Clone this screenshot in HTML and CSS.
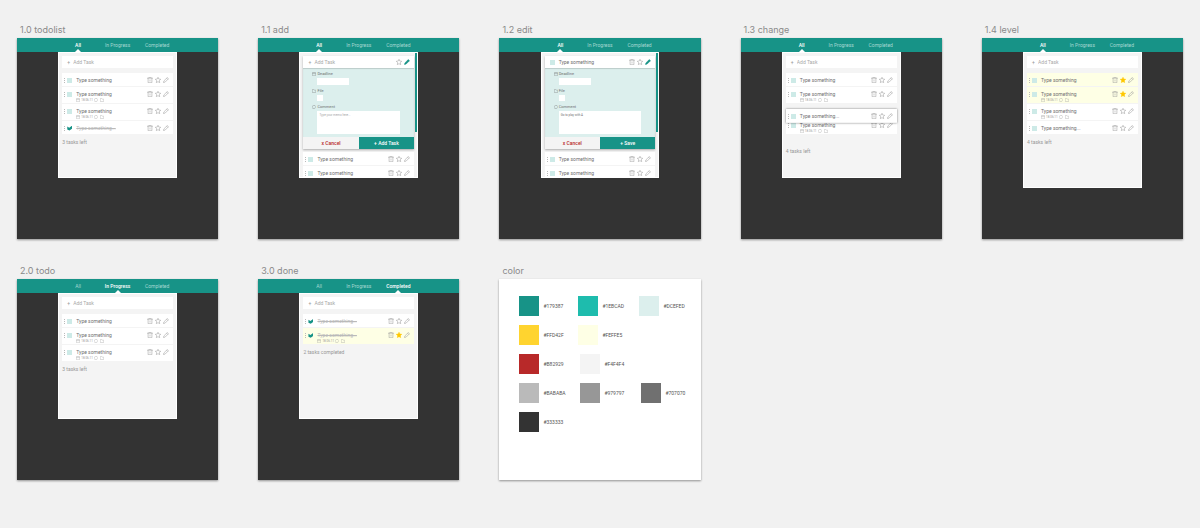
FILE: index.html
```
<!DOCTYPE html>
<html lang="en">
<head>
    <meta charset="UTF-8">
    <meta name="viewport" content="width=device-width, initial-scale=1.0">
    <title>Todolist</title>
    <link rel="stylesheet" href="styles.css">
</head>
<body>
    <!-- shared icons -->
    <svg class="sprite" aria-hidden="true">
        <symbol id="trash" viewBox="0 0 12 12"><path d="M0 2.4h12M3.8 2.4V.6h4.4v1.8M2.2 2.4v9h7.6v-9M6 5v4"/></symbol>
        <symbol id="star" viewBox="0 0 12 12"><path d="M6 0.6l1.6 3.5 3.9.5-2.9 2.7.8 3.9L6 9.3l-3.4 1.9.8-3.9L.5 4.6l3.9-.5z"/></symbol>
        <symbol id="pen" viewBox="0 0 12 12"><path d="M1 11l.8-3.2L8.6 1l2.4 2.4-6.8 6.8zM7.2 2.4l2.4 2.4"/></symbol>
        <symbol id="date" viewBox="0 0 12 12"><path d="M1 2h10v9H1zM1 4.8h10M3.5 0.5v2M8.5 0.5v2"/></symbol>
        <symbol id="memo" viewBox="0 0 12 12"><path d="M3 1.5h6l2 2V8L9 10H5l-2.5 1.5V9.5L1 8V3.5z"/></symbol>
        <symbol id="file" viewBox="0 0 12 12"><path d="M1 10.5v-9h4l1.3 1.8H11v7.2z"/></symbol>
    </svg>

    <main class="boards">
        <section>
            <h2>1.0 todolist</h2>
            <div class="board">
                <nav>
                    <ul>
                        <li><a href="#all" class="active">All</a></li>
                        <li><a href="#progress">In Progress</a></li>
                        <li><a href="#completed">Completed</a></li>
                    </ul>
                </nav>
                <div class="panel">
                    <div class="add-box"><span>+</span><input type="text" placeholder="Add Task" aria-label="Add Task"></div>
                    <ul class="tasks">
                        <li class="task">
                            <i class="drag"></i><label><input type="checkbox"><span>Type something</span></label>
                            <div class="tools"><button aria-label="Delete"><svg><use href="#trash"/></svg></button><button aria-label="Star"><svg><use href="#star"/></svg></button><button aria-label="Edit"><svg><use href="#pen"/></svg></button></div>
                        </li>
                        <li class="task">
                            <i class="drag"></i><label><input type="checkbox"><span>Type something</span></label>
                            <div class="tools"><button aria-label="Delete"><svg><use href="#trash"/></svg></button><button aria-label="Star"><svg><use href="#star"/></svg></button><button aria-label="Edit"><svg><use href="#pen"/></svg></button></div>
                            <p class="meta"><svg><use href="#date"/></svg>18.06.11<svg><use href="#memo"/></svg><svg><use href="#file"/></svg></p>
                        </li>
                        <li class="task">
                            <i class="drag"></i><label><input type="checkbox"><span>Type something</span></label>
                            <div class="tools"><button aria-label="Delete"><svg><use href="#trash"/></svg></button><button aria-label="Star"><svg><use href="#star"/></svg></button><button aria-label="Edit"><svg><use href="#pen"/></svg></button></div>
                            <p class="meta"><svg><use href="#date"/></svg>18.06.11<svg><use href="#memo"/></svg><svg><use href="#file"/></svg></p>
                        </li>
                        <li class="task done">
                            <i class="drag"></i><label><input type="checkbox" checked><span>Type something...</span></label>
                            <div class="tools"><button aria-label="Delete"><svg><use href="#trash"/></svg></button><button aria-label="Star"><svg><use href="#star"/></svg></button><button aria-label="Edit"><svg><use href="#pen"/></svg></button></div>
                        </li>
                    </ul>
                    <p class="count">3 tasks left</p>
                </div>
            </div>
        </section>

        <section>
            <h2>1.1 add</h2>
            <div class="board">
                <nav>
                    <ul>
                        <li><a href="#all" class="active">All</a></li>
                        <li><a href="#progress">In Progress</a></li>
                        <li><a href="#completed">Completed</a></li>
                    </ul>
                </nav>
                <div class="panel scroll">
                    <form class="editor">
                        <div class="add-box">
                            <span>+</span><input type="text" placeholder="Add Task" aria-label="Add Task">
                            <div class="tools"><button type="button" aria-label="Star"><svg><use href="#star"/></svg></button><button type="button" class="editing" aria-label="Edit"><svg><use href="#pen"/></svg></button></div>
                        </div>
                        <div class="fields">
                            <label for="add-date"><svg><use href="#date"/></svg>Deadline</label>
                            <input type="text" id="add-date" class="date">
                            <label for="add-file"><svg><use href="#file"/></svg>File</label>
                            <button type="button" id="add-file" class="file"></button>
                            <label for="add-memo"><svg><use href="#memo"/></svg>Comment</label>
                            <textarea id="add-memo" placeholder="Type your memo here..."></textarea>
                        </div>
                        <div class="actions">
                            <button type="button" class="cancel">x Cancel</button>
                            <button type="button" class="save">+ Add Task</button>
                        </div>
                    </form>
                    <ul class="tasks">
                        <li class="task">
                            <i class="drag"></i><label><input type="checkbox"><span>Type something</span></label>
                            <div class="tools"><button aria-label="Delete"><svg><use href="#trash"/></svg></button><button aria-label="Star"><svg><use href="#star"/></svg></button><button aria-label="Edit"><svg><use href="#pen"/></svg></button></div>
                        </li>
                        <li class="task">
                            <i class="drag"></i><label><input type="checkbox"><span>Type something</span></label>
                            <div class="tools"><button aria-label="Delete"><svg><use href="#trash"/></svg></button><button aria-label="Star"><svg><use href="#star"/></svg></button><button aria-label="Edit"><svg><use href="#pen"/></svg></button></div>
                        </li>
                    </ul>
                </div>
            </div>
        </section>

        <section>
            <h2>1.2 edit</h2>
            <div class="board">
                <nav>
                    <ul>
                        <li><a href="#all" class="active">All</a></li>
                        <li><a href="#progress">In Progress</a></li>
                        <li><a href="#completed">Completed</a></li>
                    </ul>
                </nav>
                <div class="panel scroll">
                    <form class="editor">
                        <div class="task">
                            <i class="drag hidden"></i><label><input type="checkbox"><span>Type something</span></label>
                            <div class="tools"><button type="button" aria-label="Delete"><svg><use href="#trash"/></svg></button><button type="button" aria-label="Star"><svg><use href="#star"/></svg></button><button type="button" class="editing" aria-label="Edit"><svg><use href="#pen"/></svg></button></div>
                        </div>
                        <div class="fields">
                            <label for="edit-date"><svg><use href="#date"/></svg>Deadline</label>
                            <input type="text" id="edit-date" class="date">
                            <label for="edit-file"><svg><use href="#file"/></svg>File</label>
                            <button type="button" id="edit-file" class="file"></button>
                            <label for="edit-memo"><svg><use href="#memo"/></svg>Comment</label>
                            <textarea id="edit-memo">Go to play with A</textarea>
                        </div>
                        <div class="actions">
                            <button type="button" class="cancel">x Cancel</button>
                            <button type="button" class="save">+ Save</button>
                        </div>
                    </form>
                    <ul class="tasks">
                        <li class="task">
                            <i class="drag"></i><label><input type="checkbox"><span>Type something</span></label>
                            <div class="tools"><button aria-label="Delete"><svg><use href="#trash"/></svg></button><button aria-label="Star"><svg><use href="#star"/></svg></button><button aria-label="Edit"><svg><use href="#pen"/></svg></button></div>
                        </li>
                        <li class="task">
                            <i class="drag"></i><label><input type="checkbox"><span>Type something</span></label>
                            <div class="tools"><button aria-label="Delete"><svg><use href="#trash"/></svg></button><button aria-label="Star"><svg><use href="#star"/></svg></button><button aria-label="Edit"><svg><use href="#pen"/></svg></button></div>
                        </li>
                    </ul>
                </div>
            </div>
        </section>

        <section>
            <h2>1.3 change</h2>
            <div class="board">
                <nav>
                    <ul>
                        <li><a href="#all" class="active">All</a></li>
                        <li><a href="#progress">In Progress</a></li>
                        <li><a href="#completed">Completed</a></li>
                    </ul>
                </nav>
                <div class="panel">
                    <div class="add-box"><span>+</span><input type="text" placeholder="Add Task" aria-label="Add Task"></div>
                    <ul class="tasks sorting">
                        <li class="task">
                            <i class="drag"></i><label><input type="checkbox"><span>Type something</span></label>
                            <div class="tools"><button aria-label="Delete"><svg><use href="#trash"/></svg></button><button aria-label="Star"><svg><use href="#star"/></svg></button><button aria-label="Edit"><svg><use href="#pen"/></svg></button></div>
                        </li>
                        <li class="task">
                            <i class="drag"></i><label><input type="checkbox"><span>Type something</span></label>
                            <div class="tools"><button aria-label="Delete"><svg><use href="#trash"/></svg></button><button aria-label="Star"><svg><use href="#star"/></svg></button><button aria-label="Edit"><svg><use href="#pen"/></svg></button></div>
                            <p class="meta"><svg><use href="#date"/></svg>18.06.11<svg><use href="#memo"/></svg><svg><use href="#file"/></svg></p>
                        </li>
                        <li class="task dragging">
                            <i class="drag"></i><label><input type="checkbox"><span>Type something...</span></label>
                            <div class="tools"><button aria-label="Delete"><svg><use href="#trash"/></svg></button><button aria-label="Star"><svg><use href="#star"/></svg></button><button aria-label="Edit"><svg><use href="#pen"/></svg></button></div>
                        </li>
                        <li class="task">
                            <i class="drag"></i><label><input type="checkbox"><span>Type something</span></label>
                            <div class="tools"><button aria-label="Delete"><svg><use href="#trash"/></svg></button><button aria-label="Star"><svg><use href="#star"/></svg></button><button aria-label="Edit"><svg><use href="#pen"/></svg></button></div>
                            <p class="meta"><svg><use href="#date"/></svg>18.06.11<svg><use href="#memo"/></svg><svg><use href="#file"/></svg></p>
                        </li>
                    </ul>
                    <p class="count">4 tasks left</p>
                </div>
            </div>
        </section>

        <section>
            <h2>1.4 level</h2>
            <div class="board">
                <nav>
                    <ul>
                        <li><a href="#all" class="active">All</a></li>
                        <li><a href="#progress">In Progress</a></li>
                        <li><a href="#completed">Completed</a></li>
                    </ul>
                </nav>
                <div class="panel tall">
                    <div class="add-box"><span>+</span><input type="text" placeholder="Add Task" aria-label="Add Task"></div>
                    <ul class="tasks">
                        <li class="task starred">
                            <i class="drag"></i><label><input type="checkbox"><span>Type something</span></label>
                            <div class="tools"><button aria-label="Delete"><svg><use href="#trash"/></svg></button><button class="on" aria-label="Star"><svg><use href="#star"/></svg></button><button aria-label="Edit"><svg><use href="#pen"/></svg></button></div>
                        </li>
                        <li class="task starred">
                            <i class="drag"></i><label><input type="checkbox"><span>Type something</span></label>
                            <div class="tools"><button aria-label="Delete"><svg><use href="#trash"/></svg></button><button class="on" aria-label="Star"><svg><use href="#star"/></svg></button><button aria-label="Edit"><svg><use href="#pen"/></svg></button></div>
                            <p class="meta"><svg><use href="#date"/></svg>18.06.11<svg><use href="#memo"/></svg><svg><use href="#file"/></svg></p>
                        </li>
                        <li class="task">
                            <i class="drag"></i><label><input type="checkbox"><span>Type something</span></label>
                            <div class="tools"><button aria-label="Delete"><svg><use href="#trash"/></svg></button><button aria-label="Star"><svg><use href="#star"/></svg></button><button aria-label="Edit"><svg><use href="#pen"/></svg></button></div>
                            <p class="meta"><svg><use href="#date"/></svg>18.06.11<svg><use href="#memo"/></svg><svg><use href="#file"/></svg></p>
                        </li>
                        <li class="task">
                            <i class="drag"></i><label><input type="checkbox"><span>Type something...</span></label>
                            <div class="tools"><button aria-label="Delete"><svg><use href="#trash"/></svg></button><button aria-label="Star"><svg><use href="#star"/></svg></button><button aria-label="Edit"><svg><use href="#pen"/></svg></button></div>
                        </li>
                    </ul>
                    <p class="count">4 tasks left</p>
                </div>
            </div>
        </section>

        <section>
            <h2>2.0 todo</h2>
            <div class="board">
                <nav>
                    <ul>
                        <li><a href="#all">All</a></li>
                        <li><a href="#progress" class="active">In Progress</a></li>
                        <li><a href="#completed">Completed</a></li>
                    </ul>
                </nav>
                <div class="panel">
                    <div class="add-box"><span>+</span><input type="text" placeholder="Add Task" aria-label="Add Task"></div>
                    <ul class="tasks">
                        <li class="task">
                            <i class="drag"></i><label><input type="checkbox"><span>Type something</span></label>
                            <div class="tools"><button aria-label="Delete"><svg><use href="#trash"/></svg></button><button aria-label="Star"><svg><use href="#star"/></svg></button><button aria-label="Edit"><svg><use href="#pen"/></svg></button></div>
                        </li>
                        <li class="task">
                            <i class="drag"></i><label><input type="checkbox"><span>Type something</span></label>
                            <div class="tools"><button aria-label="Delete"><svg><use href="#trash"/></svg></button><button aria-label="Star"><svg><use href="#star"/></svg></button><button aria-label="Edit"><svg><use href="#pen"/></svg></button></div>
                            <p class="meta"><svg><use href="#date"/></svg>18.06.11<svg><use href="#memo"/></svg><svg><use href="#file"/></svg></p>
                        </li>
                        <li class="task">
                            <i class="drag"></i><label><input type="checkbox"><span>Type something</span></label>
                            <div class="tools"><button aria-label="Delete"><svg><use href="#trash"/></svg></button><button aria-label="Star"><svg><use href="#star"/></svg></button><button aria-label="Edit"><svg><use href="#pen"/></svg></button></div>
                            <p class="meta"><svg><use href="#date"/></svg>18.06.11<svg><use href="#memo"/></svg><svg><use href="#file"/></svg></p>
                        </li>
                    </ul>
                    <p class="count">3 tasks left</p>
                </div>
            </div>
        </section>

        <section>
            <h2>3.0 done</h2>
            <div class="board">
                <nav>
                    <ul>
                        <li><a href="#all">All</a></li>
                        <li><a href="#progress">In Progress</a></li>
                        <li><a href="#completed" class="active">Completed</a></li>
                    </ul>
                </nav>
                <div class="panel">
                    <div class="add-box"><span>+</span><input type="text" placeholder="Add Task" aria-label="Add Task"></div>
                    <ul class="tasks">
                        <li class="task done">
                            <i class="drag"></i><label><input type="checkbox" checked><span>Type something...</span></label>
                            <div class="tools"><button aria-label="Delete"><svg><use href="#trash"/></svg></button><button aria-label="Star"><svg><use href="#star"/></svg></button><button aria-label="Edit"><svg><use href="#pen"/></svg></button></div>
                        </li>
                        <li class="task done starred">
                            <i class="drag"></i><label><input type="checkbox" checked><span>Type something...</span></label>
                            <div class="tools"><button aria-label="Delete"><svg><use href="#trash"/></svg></button><button class="on" aria-label="Star"><svg><use href="#star"/></svg></button><button aria-label="Edit"><svg><use href="#pen"/></svg></button></div>
                            <p class="meta"><svg><use href="#date"/></svg>18.06.11<svg><use href="#memo"/></svg><svg><use href="#file"/></svg></p>
                        </li>
                    </ul>
                    <p class="count">2 tasks completed</p>
                </div>
            </div>
        </section>

        <section>
            <h2>color</h2>
            <div class="board palette">
                <div class="colors">
                    <div class="color"><i class="green"></i>#179387</div>
                    <div class="color"><i class="mint"></i>#1EBCAD</div>
                    <div class="color"><i class="pale"></i>#DCEFED</div>
                </div>
                <div class="colors">
                    <div class="color"><i class="yellow"></i>#FFD42F</div>
                    <div class="color"><i class="cream"></i>#FEFFE5</div>
                </div>
                <div class="colors wide">
                    <div class="color"><i class="red"></i>#B82929</div>
                    <div class="color"><i class="light"></i>#F4F4F4</div>
                </div>
                <div class="colors wide">
                    <div class="color"><i class="silver"></i>#BABABA</div>
                    <div class="color"><i class="gray"></i>#979797</div>
                    <div class="color"><i class="dim"></i>#707070</div>
                </div>
                <div class="colors">
                    <div class="color"><i class="dark"></i>#333333</div>
                </div>
            </div>
        </section>
    </main>
</body>
</html>
```
FILE: styles.css
```
* {
    box-sizing: border-box;
}

body {
    margin: 0;
    background: #f1f1f1;
    color: #707070;
    font-family: Roboto, "Liberation Sans", sans-serif;
    font-size: 5px;
    line-height: 6px;
}

h2, p, ul {
    margin: 0;
    padding: 0;
    list-style: none;
}

input, textarea, button {
    display: block;
    margin: 0;
    padding: 0;
    border: 0;
    border-radius: 0;
    font: inherit;
    color: inherit;
    background: none;
}

button {
    cursor: pointer;
}

svg {
    display: block;
    width: 6px;
    height: 6px;
    fill: none;
    stroke: currentColor;
    stroke-width: 1;
}

.sprite {
    position: absolute;
    width: 0;
    height: 0;
}

.boards {
    display: grid;
    grid-template-columns: repeat(5, 1fr);
    gap: 26px 40px;
    padding: 24px 17px;
}

h2 {
    padding-left: 3px;
    margin-bottom: 2px;
    font-family: Inter, Roboto, sans-serif;
    font-size: 9px;
    font-weight: 400;
    line-height: 12px;
    color: #8a8a8a;
}

.board {
    aspect-ratio: 1;
    background: #333333;
    box-shadow: 0 1px 2px rgba(0, 0, 0, 0.4);
}

/* top tabs */
nav {
    background: #179387;
}

nav ul {
    display: grid;
    grid-template-columns: repeat(3, 1fr);
    width: 59%;
    margin: 0 auto;
    text-align: center;
}

nav a {
    display: block;
    position: relative;
    line-height: 14px;
    color: #a5d8d2;
    text-decoration: none;
}

nav a.active {
    color: white;
    font-weight: 500;
}

nav a.active::after {
    content: "";
    position: absolute;
    left: 50%;
    bottom: 0;
    margin-left: -3px;
    border: 3px solid transparent;
    border-top: 0;
    border-bottom-color: white;
}

/* panel */
.panel {
    position: relative;
    width: 59%;
    height: 126px;
    margin: 0 auto;
    padding: 3px;
    border: 1px solid white;
    background: #f4f4f4;
    overflow: hidden;
}

.panel.tall {
    height: 136px;
}

.panel.scroll::after {
    content: "";
    position: absolute;
    top: 0;
    right: 0;
    width: 2px;
    height: 79px;
    background: #179387;
}

.add-box {
    display: flex;
    align-items: center;
    height: 12px;
    padding: 0 4px 0 5px;
    background: white;
    color: #979797;
}

.add-box span {
    width: 6px;
}

.add-box input {
    flex: 1;
    min-width: 0;
}

::placeholder {
    color: #a8a8a8;
    opacity: 1;
}

.tasks {
    margin-top: 5px;
}

.task {
    display: grid;
    grid-template-columns: 5px 1fr auto;
    align-items: center;
    padding: 4px 4px 3px 0;
    border-bottom: 1px solid #f4f4f4;
    background: white;
}

.task label {
    display: flex;
    align-items: center;
    gap: 4px;
}

.task input {
    appearance: none;
    width: 5px;
    height: 5px;
    background: #cdeae7;
}

.task input:checked {
    background: #179387;
    clip-path: polygon(0 20%, 40% 45%, 100% 0, 100% 60%, 45% 100%, 0 80%);
}

.drag {
    width: 1px;
    height: 5px;
    margin-left: 2px;
    background: repeating-linear-gradient(#bababa 0 1px, transparent 1px 2px);
}

.drag.hidden {
    visibility: hidden;
}

.tools {
    display: flex;
    gap: 2px;
    color: #979797;
}

.tools .editing {
    color: #179387;
}

.tools .editing svg {
    fill: #179387;
}

.tools .on {
    color: #ffc800;
}

.tools .on svg {
    fill: #ffc800;
}

.meta {
    display: flex;
    grid-column: 2 / 4;
    align-items: center;
    gap: 1px;
    padding-left: 9px;
    margin: 1px 0 -2px;
    font-size: 3px;
    line-height: 4px;
    color: #979797;
}

.meta svg {
    width: 4px;
    height: 4px;
}

.meta svg:last-child {
    margin-left: 1px;
}

.task.starred {
    background: #feffe5;
}

.task.done label {
    color: #bababa;
    text-decoration: line-through;
}

.sorting {
    margin-bottom: 13px;
}

.task.dragging {
    position: relative;
    margin: 5px 0 -5px;
    box-shadow: 0 0 2px rgba(0, 0, 0, 0.5);
}

.count {
    margin-top: 4px;
    color: #979797;
}

/* add / edit form */
.editor {
    box-shadow: 0 1px 2px rgba(0, 0, 0, 0.3);
}

.editor .task {
    height: 12px;
    padding: 0 4px 0 0;
    border: 0;
}

.editor + .tasks {
    margin-top: 3px;
}

.fields {
    padding: 3px 14px;
    background: #dcefed;
    box-shadow: inset 0 1px 1px rgba(0, 0, 0, 0.15);
}

.fields label {
    display: flex;
    align-items: center;
    gap: 1px;
    margin: 0 0 1px -5px;
    font-size: 4px;
}

.fields svg {
    width: 4px;
    height: 4px;
}

.fields .date {
    width: 32px;
    height: 7px;
    margin-bottom: 3px;
    background: white;
}

.fields .file {
    width: 6px;
    height: 6px;
    margin-bottom: 3px;
    background: white;
}

.fields textarea {
    width: 100%;
    height: 23px;
    padding: 2px;
    background: white;
    font-size: 3px;
    line-height: 4px;
    resize: none;
}

.actions {
    display: grid;
    grid-template-columns: 1fr 1fr;
}

.actions button {
    height: 12px;
    font-weight: 500;
}

.cancel {
    background: #f4f4f4;
    color: #b82929;
}

.actions .save {
    background: #179387;
    color: white;
}

/* color board */
.palette {
    display: flex;
    flex-direction: column;
    gap: 9px;
    padding: 17px 0 0 20px;
    background: white;
}

.colors {
    display: grid;
    grid-template-columns: 59px 61px 1fr;
}

.colors.wide {
    grid-template-columns: 61px 61px 1fr;
}

.color {
    display: flex;
    align-items: center;
    gap: 4px;
    color: #555555;
}

.color i {
    width: 20px;
    height: 20px;
}

.green {
    background: #179387;
}

.mint {
    background: #1ebcad;
}

.pale {
    background: #dcefed;
}

.yellow {
    background: #ffd42f;
}

.cream {
    background: #feffe5;
}

.red {
    background: #b82929;
}

.light {
    background: #f4f4f4;
}

.silver {
    background: #bababa;
}

.gray {
    background: #979797;
}

.dim {
    background: #707070;
}

.dark {
    background: #333333;
}
```
